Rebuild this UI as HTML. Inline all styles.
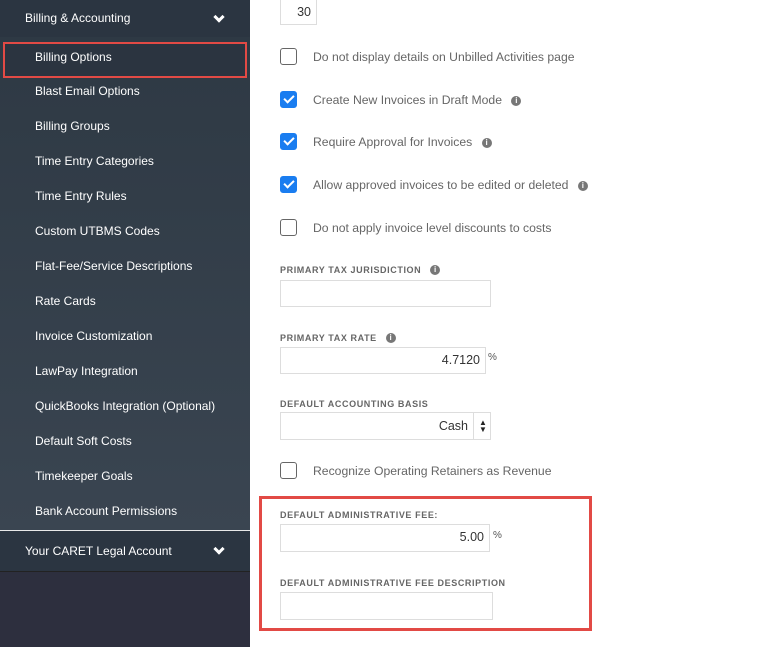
<!DOCTYPE html>
<html><head><style>
*{box-sizing:border-box;margin:0;padding:0}
body{width:759px;height:647px;background:#fff;font-family:"Liberation Sans",sans-serif;position:relative;overflow:hidden}
.sb{position:absolute;left:0;top:0;width:250px;height:647px;background:#2d2f3e}
.hd{position:absolute;left:0;width:250px;height:37px;background:#2b3541;color:#fff;font-size:12px;padding-left:25px;line-height:37px}
.items{position:absolute;left:0;top:37px;width:250px;height:493px;background:linear-gradient(#2e3944,#3a4551)}
.it{position:absolute;left:35px;color:#fff;font-size:12px;line-height:16px}
.chev{position:absolute;right:27px;top:13px;width:8px;height:8px;border-right:3px solid #fff;border-bottom:3px solid #fff;transform:rotate(45deg)}
.abs{position:absolute}
.cb{position:absolute;left:280px;width:17px;height:17px;border:1.5px solid #666;border-radius:3px}
.cb.on{background:#1a7df0;border-color:#1a7df0}
.cb.on:after{content:"";position:absolute;left:4.5px;top:1px;width:4px;height:8px;border-right:2.5px solid #fff;border-bottom:2.5px solid #fff;transform:rotate(45deg)}
.lb{position:absolute;left:313px;font-size:12.2px;color:#666;line-height:16px}
.i{display:inline-block;width:10px;height:10px;border-radius:50%;background:#777;color:#fff;font-size:8px;line-height:10px;text-align:center;font-weight:bold;vertical-align:1px;margin-left:6px}
.cap{position:absolute;left:280px;font-size:9px;font-weight:bold;color:#666;letter-spacing:0.6px;line-height:12px}
.in{position:absolute;left:280px;border:1px solid #ddd;background:#fff;font-size:12.5px;color:#333;text-align:right;line-height:25px;padding-right:5px}
.pc{position:absolute;font-size:10px;color:#555}
</style></head><body>
<div class="sb">
<div class="hd" style="top:0">Billing &amp; Accounting<div class="chev"></div></div>
<div class="items"></div>
<div class="abs" style="left:3px;top:42px;width:244px;height:36px;border:2.5px solid #e24a45;background:#2b3440"></div>
<div class="it" style="top:49px">Billing Options</div>
<div class="it" style="top:83px">Blast Email Options</div>
<div class="it" style="top:118px">Billing Groups</div>
<div class="it" style="top:153px">Time Entry Categories</div>
<div class="it" style="top:188px">Time Entry Rules</div>
<div class="it" style="top:223px">Custom UTBMS Codes</div>
<div class="it" style="top:258px">Flat-Fee/Service Descriptions</div>
<div class="it" style="top:293px">Rate Cards</div>
<div class="it" style="top:328px">Invoice Customization</div>
<div class="it" style="top:363px">LawPay Integration</div>
<div class="it" style="top:398px">QuickBooks Integration (Optional)</div>
<div class="it" style="top:433px">Default Soft Costs</div>
<div class="it" style="top:468px">Timekeeper Goals</div>
<div class="it" style="top:503px">Bank Account Permissions</div>
<div class="abs" style="left:0;top:530px;width:250px;height:1px;background:#e8e8e8"></div>
<div class="hd" style="top:531px;height:41px;line-height:40px;border-bottom:1px solid #222">Your CARET Legal Account<div class="chev" style="top:14px"></div></div>
</div>

<div class="in" style="top:-1px;width:37px;height:26px">30</div>
<div class="cb" style="top:48px"></div><div class="lb" style="top:49px">Do not display details on Unbilled Activities page</div>
<div class="cb on" style="top:91px"></div><div class="lb" style="top:92px">Create New Invoices in Draft Mode <span class="i">i</span></div>
<div class="cb on" style="top:133px"></div><div class="lb" style="top:134px">Require Approval for Invoices <span class="i">i</span></div>
<div class="cb on" style="top:176px"></div><div class="lb" style="top:177px">Allow approved invoices to be edited or deleted <span class="i">i</span></div>
<div class="cb" style="top:219px"></div><div class="lb" style="top:220px">Do not apply invoice level discounts to costs</div>

<div class="cap" style="top:264px">PRIMARY TAX JURISDICTION <span class="i">i</span></div>
<div class="in" style="top:280px;width:211px;height:27px"></div>
<div class="cap" style="top:332px">PRIMARY TAX RATE <span class="i">i</span></div>
<div class="in" style="top:347px;width:206px;height:27px">4.7120</div><div class="pc" style="left:488px;top:352px">%</div>
<div class="cap" style="top:398px">DEFAULT ACCOUNTING BASIS</div>
<div class="in" style="top:412px;width:211px;height:28px;padding-right:22px;line-height:27px">Cash</div>
<div class="abs" style="left:473px;top:413px;width:1px;height:26px;background:#ddd"></div>
<div class="abs" style="left:479px;top:419px;font-size:8px;line-height:7px;color:#222">▲<br>▼</div>
<div class="cb" style="top:462px"></div><div class="lb" style="top:463px">Recognize Operating Retainers as Revenue</div>

<div class="abs" style="left:259px;top:496px;width:333px;height:135px;border:3px solid #e24a45"></div>
<div class="cap" style="top:509px">DEFAULT ADMINISTRATIVE FEE:</div>
<div class="in" style="top:524px;width:210px;height:28px">5.00</div><div class="pc" style="left:493px;top:530px">%</div>
<div class="cap" style="top:577px">DEFAULT ADMINISTRATIVE FEE DESCRIPTION</div>
<div class="in" style="top:592px;width:213px;height:28px"></div>
</body></html>
